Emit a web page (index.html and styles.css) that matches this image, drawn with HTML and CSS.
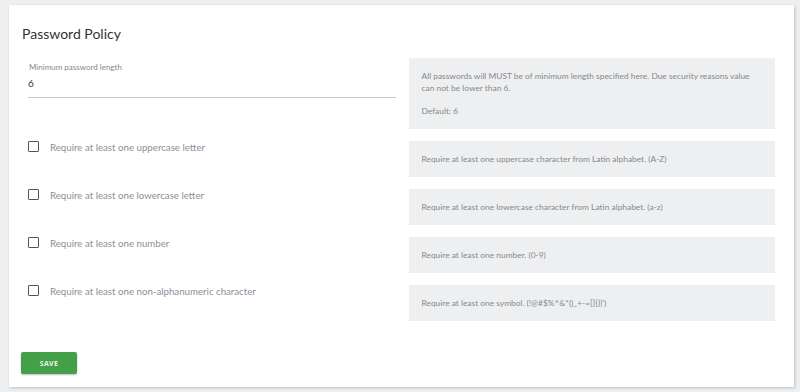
FILE: index.html
```html
<!DOCTYPE html>
<html lang="en">
<head>
    <meta charset="UTF-8">
    <title>Password Policy</title>
    <link rel="stylesheet" href="styles.css">
</head>
<body>
    <div class="card">
        <h2 class="card-title">Password Policy</h2>

        <div class="policy-row policy-row-first">
            <div class="policy-field">
                <label class="field-label" for="minLength">Minimum password length</label>
                <input class="field-input" id="minLength" type="text" value="6">
            </div>
            <div class="policy-hint">
                <p>All passwords will MUST be of minimum length specified here. Due security reasons value can not be lower than 6.</p>
                <p>Default: 6</p>
            </div>
        </div>

        <div class="policy-row">
            <div class="policy-field">
                <label class="check"><span class="check-box"></span>Require at least one uppercase letter</label>
            </div>
            <div class="policy-hint">Require at least one uppercase character from Latin alphabet. (A-Z)</div>
        </div>

        <div class="policy-row">
            <div class="policy-field">
                <label class="check"><span class="check-box"></span>Require at least one lowercase letter</label>
            </div>
            <div class="policy-hint">Require at least one lowercase character from Latin alphabet. (a-z)</div>
        </div>

        <div class="policy-row">
            <div class="policy-field">
                <label class="check"><span class="check-box"></span>Require at least one number</label>
            </div>
            <div class="policy-hint">Require at least one number. (0-9)</div>
        </div>

        <div class="policy-row">
            <div class="policy-field">
                <label class="check"><span class="check-box"></span>Require at least one non-alphanumeric character</label>
            </div>
            <div class="policy-hint">Require at least one symbol. (!@#$%^&amp;*()_+-=[]{}|')</div>
        </div>

        <button class="btn-save" type="button">SAVE</button>
    </div>
</body>
</html>
```

FILE: styles.css
```css
* {
    margin: 0;
    padding: 0;
    box-sizing: border-box;
}

body {
    font-family: Lato, 'Open Sans', sans-serif;
    background: #eeeff1;
    color: #333;
    padding: 5px 6px 5px 9px;
}

.card {
    background: #fff;
    height: 382px;
    padding: 20px 13px 12px 13px;
    box-shadow: 1px 1px 3px rgba(0, 0, 0, 0.2);
}

.card-title {
    font-size: 14px;
    font-weight: 400;
    color: #333;
    line-height: 18px;
    margin-bottom: 15px;
}

.policy-row {
    display: grid;
    grid-template-columns: 1fr 1fr;
    margin-bottom: 12px;
}

.policy-row-first {
    margin-bottom: 12px;
}

.policy-field,
.policy-hint {
    margin: 0 6px;
}

.policy-hint {
    margin-left: 7px;
}

.field-label {
    display: block;
    font-size: 8px;
    color: #888;
    padding: 4px 0 0 1px;
    line-height: 10px;
}

.field-input {
    display: block;
    width: 100%;
    border: none;
    border-bottom: 1px solid #ccc;
    font-family: inherit;
    font-size: 10px;
    color: #333;
    padding: 5px 0 8px;
    outline: none;
}

.policy-hint {
    background: #eeeff1;
    padding: 12px 13px;
    font-size: 8.4px;
    line-height: 12px;
    color: #888;
}

.policy-row .policy-hint:not(:has(p)) {
    height: 36px;
    display: flex;
    align-items: center;
}

.policy-hint p + p {
    margin-top: 11px;
}

.check {
    display: flex;
    align-items: center;
    gap: 11px;
    font-size: 9.7px;
    color: #8a8f99;
    line-height: 12px;
}

.check-box {
    width: 11px;
    height: 11px;
    border: 1.5px solid #555;
    border-radius: 1px;
    flex-shrink: 0;
    margin-top: -1px;
}

.btn-save {
    margin: 19px 0 0 -1px;
    width: 56px;
    height: 22px;
    border: none;
    border-radius: 2px;
    background: #43a047;
    color: #e8f5e9;
    font-family: 'Open Sans', sans-serif;
    font-size: 7px;
    font-weight: 700;
    letter-spacing: 0.3px;
    box-shadow: 0 1px 2px rgba(0, 0, 0, 0.25);
}
```
